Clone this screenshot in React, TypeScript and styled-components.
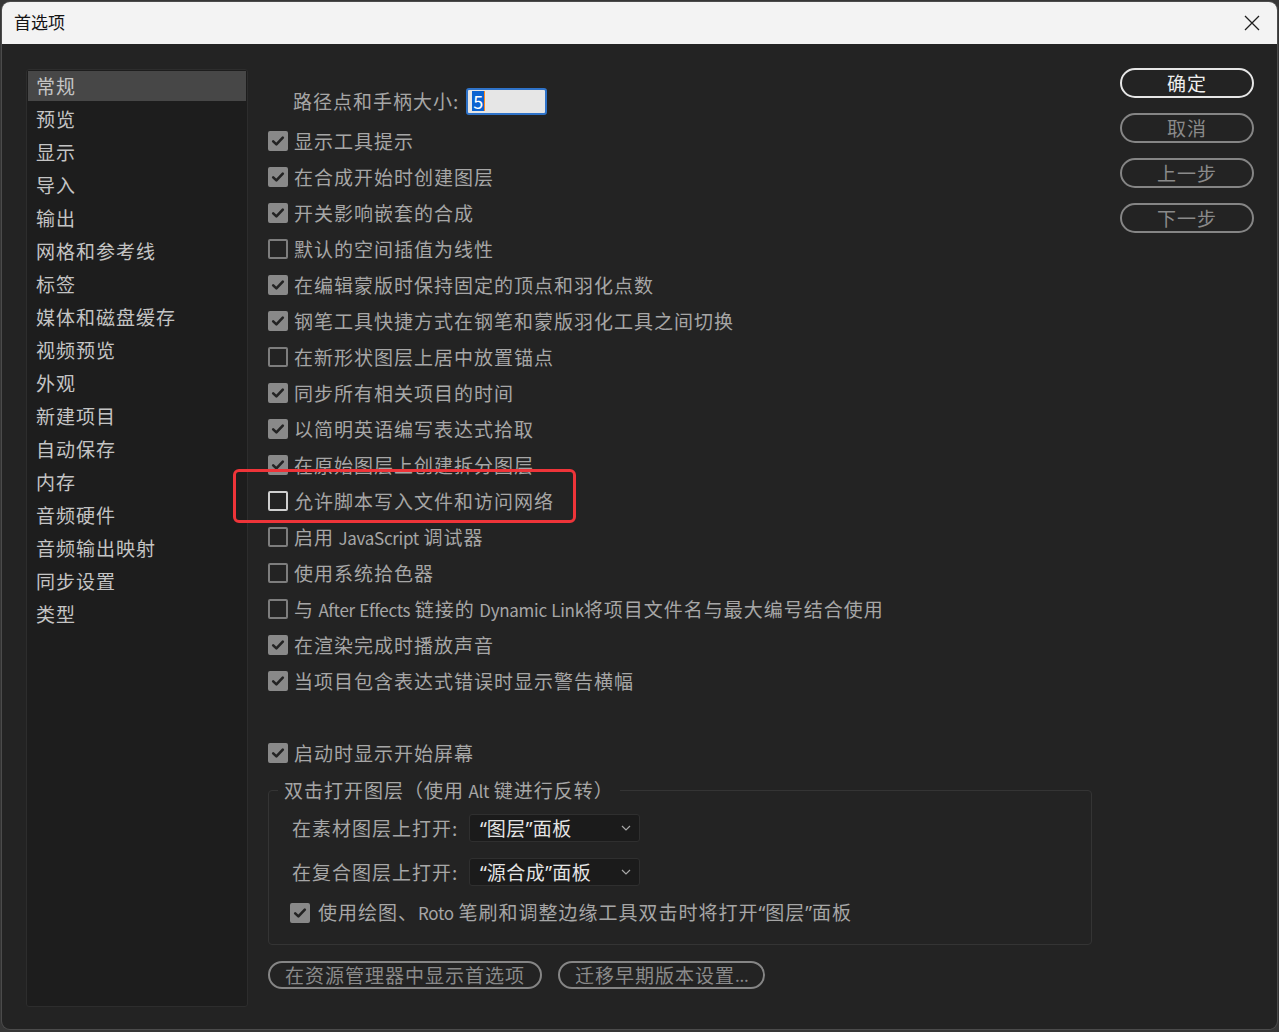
import React from 'react'
import styled, { createGlobalStyle } from 'styled-components'

const GlobalStyle = createGlobalStyle`
  html, body {
    margin: 0;
    padding: 0;
    height: 100%;
  }
  body {
    background: #363636;
    font-family: "Noto Sans CJK SC", "Noto Sans", sans-serif;
    overflow: hidden;
  }
`

const Screen = styled.div`
  height: 100vh;
  box-sizing: border-box;
  padding: 2px 2px 3px 2px;
  display: flex;
`

const Window = styled.div`
  flex: 1;
  display: flex;
  flex-direction: column;
  border-radius: 8px;
  overflow: hidden;
  background: #232323;
  box-shadow: 0 0 0 1px #4b4b4b;
`

const TitleBar = styled.div`
  height: 42px;
  flex: none;
  box-sizing: border-box;
  display: flex;
  align-items: center;
  justify-content: space-between;
  padding: 0 17px 3px 12px;
  background: #f3f3f3;
  color: #141414;
  font-size: 17px;
`

const CloseIcon = styled.svg`
  width: 16px;
  height: 16px;
  margin-top: 3px;
  stroke: #1e1e1e;
  stroke-width: 1.3;
`

const Body = styled.div`
  flex: 1;
  display: flex;
  min-height: 0;
  padding: 25px 23px 22px 24px;
`

const Sidebar = styled.ul`
  list-style: none;
  margin: 0;
  width: 222px;
  flex: none;
  box-sizing: border-box;
  padding: 1px;
  display: flex;
  flex-direction: column;
  gap: 3px;
  background: #1d1d1d;
  border: 1px solid #2d2d2d;
  border-radius: 3px;
`

const SideItem = styled.li<{ $active?: boolean }>`
  height: 30px;
  box-sizing: border-box;
  display: flex;
  align-items: center;
  padding: 0 0 2px 8px;
  font-size: 19px;
  letter-spacing: 1px;
  color: #c4c4c4;
  background: ${(p) => (p.$active ? '#474747' : 'transparent')};
`

const Main = styled.div`
  flex: 1;
  min-width: 0;
  margin-left: 20px;
  padding-top: 14px;
  display: flex;
  flex-direction: column;
  color: #a6a6a6;
  font-size: 19px;
  letter-spacing: 1px;
`

const PathRow = styled.div`
  height: 36px;
  margin-bottom: 4px;
  display: flex;
  align-items: center;
  padding-left: 25px;
  gap: 7px;
`

const NumberBox = styled.div`
  width: 81px;
  height: 27px;
  flex: none;
  box-sizing: border-box;
  border: 2px solid #2f73c9;
  border-radius: 3px;
  background: #e6e6e6;
  display: flex;
  align-items: center;
  padding-left: 4px;
`

const Selected = styled.span`
  background: #0a63d1;
  color: #ffffff;
  font-size: 18px;
  line-height: 20px;
  padding: 0 1px;
  letter-spacing: 0;
  border-right: 1px solid #ff8a1f;
`

const Row = styled.div<{ $indent?: number; $gap?: number; $top?: number }>`
  position: relative;
  height: 36px;
  display: flex;
  align-items: center;
  gap: ${(p) => p.$gap ?? 6}px;
  margin-top: ${(p) => p.$top ?? 0}px;
  padding-left: ${(p) => p.$indent ?? 0}px;
  white-space: nowrap;
`

const Label = styled.span`
  margin-top: -2px;
`

const Latin = styled.span`
  font-size: 17px;
  letter-spacing: -0.3px;
  word-spacing: 1px;
`

const Spacer = styled.div`
  height: 36px;
`

const Box = styled.span<{ $checked?: boolean; $focus?: boolean }>`
  width: 20px;
  height: 20px;
  flex: none;
  box-sizing: border-box;
  border-radius: 2px;
  display: flex;
  align-items: center;
  justify-content: center;
  background: ${(p) => (p.$checked ? '#898989' : 'transparent')};
  border: 2px solid
    ${(p) => (p.$checked ? '#898989' : p.$focus ? '#cfcfcf' : '#7d7d7d')};
`

const Tick = styled.svg`
  width: 16px;
  height: 16px;
  fill: none;
  stroke: #232323;
  stroke-width: 2.6;
  stroke-linecap: round;
  stroke-linejoin: round;
`

const Highlight = styled.span`
  position: absolute;
  left: -35px;
  top: -14px;
  width: 343px;
  height: 54px;
  box-sizing: border-box;
  border: 3px solid #ee3439;
  border-radius: 6px;
  pointer-events: none;
`

const Group = styled.fieldset`
  margin: 7px 0 0 0;
  padding: 0 0 13px 0;
  border: 1px solid #343434;
  border-radius: 4px;
  min-width: 0;
`

const Legend = styled.legend`
  margin-left: 9px;
  padding: 0 6px;
  line-height: 24px;
  color: #a6a6a6;
`

const FieldRow = styled.div<{ $gap: number }>`
  height: 36px;
  margin-top: ${(p) => p.$gap}px;
  display: flex;
  align-items: center;
  padding-left: 23px;
`

const FieldLabel = styled.span`
  width: 177px;
  flex: none;
  margin-top: -2px;
`

const Dropdown = styled.div`
  width: 171px;
  height: 28px;
  box-sizing: border-box;
  display: flex;
  align-items: center;
  justify-content: space-between;
  padding: 0 7px 1px 10px;
  background: #1b1b1b;
  border: 1px solid #2f2f2f;
  border-radius: 3px;
  color: #e4e4e4;
  letter-spacing: 0.5px;
`

const Chevron = styled.svg`
  width: 12px;
  height: 12px;
  fill: none;
  stroke: #a8a8a8;
  stroke-width: 1.2;
`

const Quote = styled.span`
  font-family: "Noto Sans", sans-serif;
  letter-spacing: 0;
`

const BottomBar = styled.div`
  margin-top: 16px;
  display: flex;
  gap: 16px;
`

const Pill = styled.button<{ $primary?: boolean }>`
  height: 28px;
  box-sizing: border-box;
  padding: 0 15px 2px 15px;
  border-radius: 15px;
  border: 2px solid ${(p) => (p.$primary ? '#e6e6e6' : '#858585')};
  background: transparent;
  color: ${(p) => (p.$primary ? '#eeeeee' : '#8a8a8a')};
  font-family: inherit;
  font-size: 19px;
  letter-spacing: 1px;
  line-height: 1;
  display: flex;
  align-items: center;
  justify-content: center;
`

const ActionColumn = styled.div`
  width: 134px;
  flex: none;
  margin-left: 28px;
  margin-top: -1px;
  display: flex;
  flex-direction: column;
  gap: 15px;
`

const ActionButton = styled(Pill)`
  width: 134px;
  height: 30px;
  padding: 0 0 2px 0;
`

const sections = [
  '常规',
  '预览',
  '显示',
  '导入',
  '输出',
  '网格和参考线',
  '标签',
  '媒体和磁盘缓存',
  '视频预览',
  '外观',
  '新建项目',
  '自动保存',
  '内存',
  '音频硬件',
  '音频输出映射',
  '同步设置',
  '类型',
]

const options: { label: string; checked: boolean }[] = [
  { label: '显示工具提示', checked: true },
  { label: '在合成开始时创建图层', checked: true },
  { label: '开关影响嵌套的合成', checked: true },
  { label: '默认的空间插值为线性', checked: false },
  { label: '在编辑蒙版时保持固定的顶点和羽化点数', checked: true },
  { label: '钢笔工具快捷方式在钢笔和蒙版羽化工具之间切换', checked: true },
  { label: '在新形状图层上居中放置锚点', checked: false },
  { label: '同步所有相关项目的时间', checked: true },
  { label: '以简明英语编写表达式拾取', checked: true },
  { label: '在原始图层上创建拆分图层', checked: true },
  { label: '允许脚本写入文件和访问网络', checked: false },
  { label: '启用 JavaScript 调试器', checked: false },
  { label: '使用系统拾色器', checked: false },
  { label: '与 After Effects 链接的 Dynamic Link将项目文件名与最大编号结合使用', checked: false },
  { label: '在渲染完成时播放声音', checked: true },
  { label: '当项目包含表达式错误时显示警告横幅', checked: true },
]

// Latin runs are set smaller and tighter, like the narrow UI face in the original
function Mixed({ text }: { text: string }) {
  const parts = text.split(/( ?[A-Za-z.][A-Za-z. ]*[A-Za-z.] ?| ?[A-Za-z.] ?)/)
  return (
    <>
      {parts.map((p, i) =>
        i % 2 === 1 ? <Latin key={i}>{p}</Latin> : p ? <React.Fragment key={i}>{p}</React.Fragment> : null
      )}
    </>
  )
}

function Check({ checked, focus }: { checked: boolean; focus?: boolean }) {
  return (
    <Box $checked={checked} $focus={focus}>
      {checked && (
        <Tick viewBox="0 0 16 16">
          <path d="M3.2 8.4 L6.4 11.4 L12.8 4.6" />
        </Tick>
      )}
    </Box>
  )
}

export default function App() {
  return (
    <Screen>
      <GlobalStyle />
      <Window>
        <TitleBar>
          <span>首选项</span>
          <CloseIcon viewBox="0 0 16 16">
            <path d="M1 1 L15 15 M15 1 L1 15" />
          </CloseIcon>
        </TitleBar>
        <Body>
          <Sidebar>
            {sections.map((s, i) => (
              <SideItem key={s} $active={i === 0}>
                {s}
              </SideItem>
            ))}
          </Sidebar>

          <Main>
            <PathRow>
              <Label>路径点和手柄大小:</Label>
              <NumberBox>
                <Selected>5</Selected>
              </NumberBox>
            </PathRow>

            {options.map((o) => {
              const marked = o.label.startsWith('允许脚本')
              return (
                <Row key={o.label}>
                  <Check checked={o.checked} focus={marked} />
                  <Label>
                    <Mixed text={o.label} />
                  </Label>
                  {marked && <Highlight />}
                </Row>
              )
            })}

            <Spacer />
            <Row>
              <Check checked />
              <Label>启动时显示开始屏幕</Label>
            </Row>

            <Group>
              <Legend>
                <Mixed text="双击打开图层（使用 Alt 键进行反转）" />
              </Legend>
              <FieldRow $gap={7}>
                <FieldLabel>在素材图层上打开:</FieldLabel>
                <Dropdown>
                  <span>
                    <Quote>“</Quote>图层<Quote>”</Quote>面板
                  </span>
                  <Chevron viewBox="0 0 12 12">
                    <path d="M2 4 L6 8 L10 4" />
                  </Chevron>
                </Dropdown>
              </FieldRow>
              <FieldRow $gap={8}>
                <FieldLabel>在复合图层上打开:</FieldLabel>
                <Dropdown>
                  <span>
                    <Quote>“</Quote>源合成<Quote>”</Quote>面板
                  </span>
                  <Chevron viewBox="0 0 12 12">
                    <path d="M2 4 L6 8 L10 4" />
                  </Chevron>
                </Dropdown>
              </FieldRow>
              <Row $indent={21} $gap={8} $top={5}>
                <Check checked />
                <Label>
                  <Mixed text="使用绘图、Roto 笔刷和调整边缘工具双击时将打开" />
                  <Quote>“</Quote>图层<Quote>”</Quote>面板
                </Label>
              </Row>
            </Group>

            <BottomBar>
              <Pill>在资源管理器中显示首选项</Pill>
              <Pill>
                <Mixed text="迁移早期版本设置..." />
              </Pill>
            </BottomBar>
          </Main>

          <ActionColumn>
            <ActionButton $primary>确定</ActionButton>
            <ActionButton>取消</ActionButton>
            <ActionButton>上一步</ActionButton>
            <ActionButton>下一步</ActionButton>
          </ActionColumn>
        </Body>
      </Window>
    </Screen>
  )
}
